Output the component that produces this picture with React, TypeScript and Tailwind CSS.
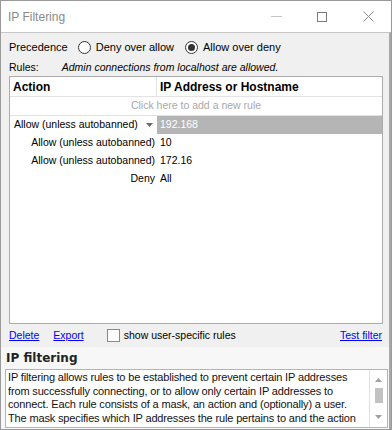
import React from "react"

const font = { fontFamily: '"Liberation Sans", Arial, sans-serif' }

const Radio = ({ checked }: { checked?: boolean }) => (
  <span className="w-[13px] h-[13px] rounded-full border border-[#333333] bg-white flex items-center justify-center">
    {checked && <span className="w-[7px] h-[7px] rounded-full bg-[#333333]" />}
  </span>
)

const rules = [
  { action: "Allow (unless autobanned)", ip: "10" },
  { action: "Allow (unless autobanned)", ip: "172.16" },
  { action: "Deny", ip: "All" },
]

const App = () => (
  <div className="w-[392px] h-[430px] flex flex-col border border-[#9a9a9a] bg-white text-[10.5px] text-black overflow-hidden font-['Liberation_Sans',Arial,sans-serif]">
    {/* title bar */}
    <div className="h-[31px] flex items-center pl-[7px] bg-white shrink-0">
      <span className="text-[12px] text-[#8a8a8a]">IP Filtering</span>
      <div className="ml-auto flex items-center h-full">
        <div className="w-[46px] h-full flex items-center justify-center">
          <span className="w-[11px] h-px bg-[#c4c4c4]" />
        </div>
        <div className="w-[46px] h-full flex items-center justify-center">
          <span className="w-[10px] h-[10px] border border-[#7a7a7a]" />
        </div>
        <div className="w-[46px] h-full flex items-center justify-center">
          <svg width="11" height="11" viewBox="0 0 11 11">
            <path d="M0.5 0.5 L10.5 10.5 M10.5 0.5 L0.5 10.5" stroke="#8a8a8a" strokeWidth="1" />
          </svg>
        </div>
      </div>
    </div>

    {/* body */}
    <div className="flex-1 flex flex-col bg-[#f0f0f0] border-t border-[#c6c6c6] border-r-2 border-r-[#a8a8a8]">
      <div className="h-[20px] mt-[4px] flex items-center pl-[8px] text-[11px]">
        <span>Precedence</span>
        <span className="ml-[10px] flex items-center gap-[5px]">
          <Radio />
          <span>Deny over allow</span>
        </span>
        <span className="ml-[11px] flex items-center gap-[5px]">
          <Radio checked />
          <span>Allow over deny</span>
        </span>
      </div>
      <div className="h-[16px] mt-[3px] flex items-center pl-[8px]">
        <span>Rules:</span>
        <span className="ml-[23px] italic">Admin connections from localhost are allowed.</span>
      </div>

      {/* grid */}
      <div className="ml-[8px] mr-[6px] h-[248px] bg-white border border-[#acacac] flex flex-col">
        <div className="h-[20px] flex border-b border-[#e3e3e3] font-bold text-[12px]">
          <div className="w-[147px] flex items-center pl-[3px] border-r border-[#e3e3e3]">Action</div>
          <div className="flex-1 flex items-center pl-[3px]">IP Address or Hostname</div>
        </div>
        <div className="h-[19px] flex items-center justify-center text-[#a8a8a8] border-b border-[#e3e3e3]">
          Click here to add a new rule
        </div>
        <div className="h-[18px] flex">
          <div className="w-[147px] flex items-center pl-[4px] pr-[4px]">
            <span>Allow (unless autobanned)</span>
            <svg className="ml-auto" width="7" height="4" viewBox="0 0 7 4">
              <path d="M0 0 H7 L3.5 4 Z" fill="#6a6a6a" />
            </svg>
          </div>
          <div className="flex-1 flex items-center pl-[3px] bg-[#b5b5b5] text-white">192.168</div>
        </div>
        {rules.map((r, i) => (
          <div key={i} className="h-[18px] flex">
            <div className="w-[147px] flex items-center justify-end pr-[2px]">{r.action}</div>
            <div className="flex-1 flex items-center pl-[3px]">{r.ip}</div>
          </div>
        ))}
      </div>

      {/* links */}
      <div className="h-[23px] flex items-center pl-[8px] pr-[7px]">
        <a className="text-[#0000ff] underline">Delete</a>
        <a className="ml-[14px] text-[#0000ff] underline">Export</a>
        <span className="ml-[23px] w-[13px] h-[13px] border border-[#8a8a8a] bg-white" />
        <span className="ml-[4px]">show user-specific rules</span>
        <a className="ml-auto text-[#0000ff] underline">Test filter</a>
      </div>

      {/* description */}
      <div className="flex-1 flex flex-col bg-[#f7f7f7]">
        <div className="h-[22px] flex items-center pl-[5px] text-[12px] font-bold text-[#222222] font-['DejaVu_Sans',sans-serif]">
          IP filtering
        </div>
        <div className="flex-1 ml-[4px] mr-[1px] mb-[1px] flex bg-white border border-[#b4b4b4] overflow-hidden">
          <div className="flex-1 pl-[2px] pr-[8px] pt-[1px] text-[11px] tracking-[-0.15px] leading-[13.5px] text-[#111111]" style={font}>
            IP filtering allows rules to be established to prevent certain IP addresses from successfully connecting, or to allow only certain IP addresses to connect. Each rule consists of a mask, an action and (optionally) a user. The mask specifies which IP addresses the rule pertains to and the action
          </div>
          <div className="w-[18px] border-l border-[#e0e0e0] flex flex-col items-center">
            <svg className="mt-[8px]" width="7" height="4" viewBox="0 0 7 4">
              <path d="M3.5 0 L7 4 H0 Z" fill="#a0a0a0" />
            </svg>
            <span className="mt-[6px] w-[8px] h-[15px] bg-[#c2c2c2]" />
            <svg className="mt-auto mb-[8px]" width="7" height="4" viewBox="0 0 7 4">
              <path d="M0 0 H7 L3.5 4 Z" fill="#a0a0a0" />
            </svg>
          </div>
        </div>
      </div>
    </div>
  </div>
)

export default App
